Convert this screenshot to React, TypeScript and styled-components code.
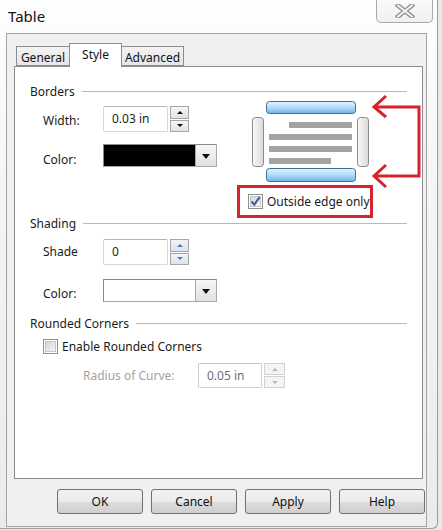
import React from "react";
import styled, { createGlobalStyle } from "styled-components";

const GlobalStyle = createGlobalStyle`
  html, body {
    margin: 0;
    padding: 0;
    background: #e9e9e9;
  }
  body {
    font-family: "Noto Sans", "Open Sans", sans-serif;
    font-size: 12px;
    color: #1a1a1a;
  }
`;

const Window = styled.div`
  width: 438px;
  height: 529px;
  display: flex;
  flex-direction: column;
  box-sizing: border-box;
  background: linear-gradient(180deg, #fefefe 0%, #f4f4f4 40%, #ebebeb 100%);
  border-right: 1px solid #9c9c9c;
  border-bottom: 1px solid #9c9c9c;
  border-bottom-right-radius: 6px;
`;

const TitleBar = styled.div`
  height: 33px;
  display: flex;
  align-items: flex-start;
  justify-content: space-between;
  flex-shrink: 0;
`;

const Title = styled.div`
  font-size: 15px;
  color: #111;
  padding: 6px 0 0 8px;
`;

const CloseButton = styled.div`
  width: 57px;
  height: 23px;
  margin-right: 4px;
  box-sizing: border-box;
  border: 1px solid #a9a9a9;
  border-top: none;
  border-radius: 0 0 5px 5px;
  background: linear-gradient(180deg, #fbfbfb, #f0f0f0);
  display: flex;
  align-items: center;
  justify-content: center;
`;

const Client = styled.div`
  flex: 1;
  margin: 0 10px 1px 6px;
  box-sizing: border-box;
  border: 1px solid #a3a3a3;
  background: #f0f0f0;
  padding: 9px 3px 0 7px;
  display: flex;
  flex-direction: column;
`;

const TabStrip = styled.div`
  display: flex;
  align-items: flex-end;
  height: 24px;
  padding-left: 3px;
  margin-bottom: -1px;
  position: relative;
  z-index: 1;
`;

const Tab = styled.div<{ $active?: boolean; $w: number }>`
  width: ${(p) => p.$w}px;
  box-sizing: border-box;
  height: ${(p) => (p.$active ? 24 : 20)}px;
  margin-bottom: ${(p) => (p.$active ? 0 : 1)}px;
  margin-left: -1px;
  border: 1px solid #898c95;
  border-bottom: ${(p) => (p.$active ? "none" : "1px solid #898c95")};
  background: ${(p) =>
    p.$active ? "#ffffff" : "linear-gradient(180deg, #f3f3f3, #e6e6e6)"};
  display: flex;
  justify-content: center;
  padding-top: 2px;
  font-size: 12px;
  color: #111;
`;

const Panel = styled.div`
  height: 413px;
  box-sizing: border-box;
  border: 1px solid #898c95;
  background: #ffffff;
  padding: 16px 15px 0 15px;
  display: flex;
  flex-direction: column;
`;

const SectionHeader = styled.div<{ $mt?: number }>`
  display: flex;
  align-items: center;
  gap: 7px;
  height: 16px;
  margin-top: ${(p) => p.$mt ?? 0}px;

  &::after {
    content: "";
    flex: 1;
    height: 1px;
    background: #b9b9b9;
  }
`;

const BordersBody = styled.div`
  display: flex;
  align-items: flex-start;
`;

const FieldColumn = styled.div`
  display: flex;
  flex-direction: column;
  padding: 7px 0 0 13px;
`;

const Row = styled.div<{ $mt?: number; $h: number; $indent?: number }>`
  display: flex;
  align-items: center;
  height: ${(p) => p.$h}px;
  margin-top: ${(p) => p.$mt ?? 0}px;
  padding-left: ${(p) => p.$indent ?? 13}px;
`;

const Label = styled.div<{ $w: number; $disabled?: boolean; $dy?: number }>`
  width: ${(p) => p.$w}px;
  flex-shrink: 0;
  color: ${(p) => (p.$disabled ? "#a3a3a3" : "#1a1a1a")};
  position: relative;
  top: ${(p) => p.$dy ?? 0}px;
`;

const TextBox = styled.div<{ $w: number; $disabled?: boolean }>`
  width: ${(p) => p.$w}px;
  height: 100%;
  box-sizing: border-box;
  border: 1px solid ${(p) => (p.$disabled ? "#cfcfcf" : "#d7d7d7")};
  border-top-color: ${(p) => (p.$disabled ? "#c4c4c4" : "#b5b5b5")};
  border-radius: 2px;
  background: #fff;
  padding: 3px 0 0 8px;
  color: ${(p) => (p.$disabled ? "#6f6f6f" : "#1a1a1a")};
`;

const Spinner = styled.div<{ $w: number }>`
  width: ${(p) => p.$w}px;
  height: 100%;
  margin-left: 2px;
  display: flex;
  flex-direction: column;
  gap: 1px;
`;

const SpinButton = styled.div<{ $tone: "black" | "blue" | "disabled"; $down?: boolean }>`
  flex: 1;
  box-sizing: border-box;
  border: 1px solid ${(p) => (p.$tone === "disabled" ? "#d2d2d2" : "#a6a6a6")};
  background: ${(p) =>
    p.$tone === "blue"
      ? "linear-gradient(180deg, #f1f3f8, #dde2ee)"
      : p.$tone === "disabled"
      ? "#f4f4f4"
      : "linear-gradient(180deg, #f6f6f6, #e2e2e2)"};
  display: flex;
  align-items: center;
  justify-content: center;

  &::before {
    content: "";
    width: 0;
    height: 0;
    border-left: 3.5px solid transparent;
    border-right: 3.5px solid transparent;
    ${(p) => (p.$down ? "border-top" : "border-bottom")}: 3px solid
      ${(p) =>
        p.$tone === "blue" ? "#5b74b4" : p.$tone === "disabled" ? "#b9b9b9" : "#111"};
  }
`;

const Combo = styled.div<{ $fill: string }>`
  width: 114px;
  height: 100%;
  box-sizing: border-box;
  border: 1px solid #a9a9a9;
  border-top-color: #8a8a8a;
  border-left-color: #8a8a8a;
  display: flex;
  background: ${(p) => p.$fill};
`;

const DropButton = styled.div`
  width: 21px;
  margin-left: auto;
  box-sizing: border-box;
  border-left: 1px solid #a9a9a9;
  background: linear-gradient(180deg, #f7f7f7, #e1e1e1);
  display: flex;
  align-items: center;
  justify-content: center;

  &::before {
    content: "";
    border-left: 4px solid transparent;
    border-right: 4px solid transparent;
    border-top: 5px solid #111;
    margin-top: 1px;
  }
`;

const PreviewColumn = styled.div`
  margin: -4px 0 -3px 20px;
  display: flex;
  flex-direction: column;
  flex-shrink: 0;
`;

const HighlightBox = styled.div`
  margin-top: 2px;
  width: 136px;
  height: 33px;
  box-sizing: border-box;
  border: 3px solid #d6232c;
  display: flex;
  align-items: center;
  padding-left: 8px;
  white-space: nowrap;
`;

const CheckRow = styled.label`
  display: flex;
  align-items: center;
  gap: 4px;
  white-space: nowrap;
`;

const CheckBox = styled.span`
  width: 15px;
  height: 15px;
  flex-shrink: 0;
  box-sizing: border-box;
  border: 1px solid #8e8f8f;
  background: #fff;
  display: flex;
  align-items: center;
  justify-content: center;
  position: relative;

  &::before {
    content: "";
    position: absolute;
    inset: 1px;
    background: linear-gradient(135deg, #d7d7d7, #f4f4f4);
    border: 1px solid #c6c6c6;
    box-sizing: border-box;
  }

  svg {
    position: relative;
  }
`;

const ButtonRow = styled.div`
  display: flex;
  justify-content: flex-end;
  gap: 8px;
  margin: 10px -2px 0 0;
`;

const DialogButton = styled.button`
  width: 86px;
  height: 25px;
  border: 1px solid #707070;
  border-radius: 3px;
  background: linear-gradient(180deg, #f2f2f2 0%, #ebebeb 50%, #dddddd 51%, #cfcfcf 100%);
  font-family: inherit;
  font-size: 12px;
  color: #111;
  padding: 0;
`;

const PreviewDrawing = () => (
  <svg width="187" height="88" viewBox="0 0 187 88" style={{ overflow: "visible" }}>
    <defs>
      <linearGradient id="blueBar" x1="0" y1="0" x2="0" y2="1">
        <stop offset="0" stopColor="#e4f3fd" />
        <stop offset="0.45" stopColor="#b7def8" />
        <stop offset="1" stopColor="#6fb4e6" />
      </linearGradient>
      <linearGradient id="grayBar" x1="0" y1="0" x2="1" y2="0">
        <stop offset="0" stopColor="#fafafa" />
        <stop offset="1" stopColor="#d9d9d9" />
      </linearGradient>
    </defs>
    <rect x="29.5" y="6.5" width="89" height="12" rx="3" fill="url(#blueBar)" stroke="#3f6f95" />
    <rect x="29.5" y="73.5" width="89" height="13" rx="3" fill="url(#blueBar)" stroke="#3f6f95" />
    <rect x="15.5" y="22.5" width="11" height="49" rx="3" fill="url(#grayBar)" stroke="#8a8a8a" />
    <rect x="120.5" y="22.5" width="11" height="49" rx="3" fill="url(#grayBar)" stroke="#8a8a8a" />
    <rect x="52" y="27" width="63" height="6" fill="#a3a3a3" />
    <rect x="32" y="39" width="83" height="6" fill="#a3a3a3" />
    <rect x="32" y="51" width="83" height="6" fill="#a3a3a3" />
    <rect x="32" y="63" width="62" height="6" fill="#a3a3a3" />
    <g fill="none" stroke="#d6232c" strokeWidth="3">
      <path d="M137 12 H182 V81 H137" />
      <path d="M149 1 L137 12 L149 22" />
      <path d="M149 70 L137 81 L149 92" />
    </g>
  </svg>
);

const CheckMark = () => (
  <svg width="11" height="11" viewBox="0 0 11 11">
    <path d="M1.5 5.5 L4.3 8.6 L9.6 1.2" fill="none" stroke="#3b5b9d" strokeWidth="2" />
  </svg>
);

const CloseGlyph = () => (
  <svg width="20" height="14" viewBox="0 0 20 14">
    <g fill="none" strokeLinecap="square">
      <path d="M3 1.5 L17 12.5 M17 1.5 L3 12.5" stroke="#8a8a8a" strokeWidth="4.5" />
      <path d="M3 1.5 L17 12.5 M17 1.5 L3 12.5" stroke="#f3f3f3" strokeWidth="2" />
    </g>
  </svg>
);

const App = () => {
  return (
    <>
      <GlobalStyle />
      <Window>
        <TitleBar>
          <Title>Table</Title>
          <CloseButton>
            <CloseGlyph />
          </CloseButton>
        </TitleBar>
        <Client>
          <TabStrip>
            <Tab $w={54}>General</Tab>
            <Tab $w={53} $active>
              Style
            </Tab>
            <Tab $w={63}>Advanced</Tab>
          </TabStrip>
          <Panel>
            {/* Borders */}
            <SectionHeader>Borders</SectionHeader>
            <BordersBody>
              <FieldColumn>
                <Row $h={26} $indent={0}>
                  <Label $w={60} $dy={1}>Width:</Label>
                  <TextBox $w={65}>0.03 in</TextBox>
                  <Spinner $w={19}>
                    <SpinButton $tone="black" />
                    <SpinButton $tone="black" $down />
                  </Spinner>
                </Row>
                <Row $h={23} $mt={12} $indent={0}>
                  <Label $w={60} $dy={4}>Color:</Label>
                  <Combo $fill="#000">
                    <DropButton />
                  </Combo>
                </Row>
              </FieldColumn>
              <PreviewColumn>
                <PreviewDrawing />
                <HighlightBox>
                  <CheckRow>
                    <CheckBox>
                      <CheckMark />
                    </CheckBox>
                    Outside edge only
                  </CheckRow>
                </HighlightBox>
              </PreviewColumn>
            </BordersBody>

            {/* Shading */}
            <SectionHeader>Shading</SectionHeader>
            <Row $h={26} $mt={8}>
              <Label $w={60} $dy={-1}>Shade</Label>
              <TextBox $w={65}>0</TextBox>
              <Spinner $w={19}>
                <SpinButton $tone="blue" />
                <SpinButton $tone="blue" $down />
              </Spinner>
            </Row>
            <Row $h={23} $mt={14}>
              <Label $w={60} $dy={3}>Color:</Label>
              <Combo $fill="#fff">
                <DropButton />
              </Combo>
            </Row>

            {/* Rounded Corners */}
            <SectionHeader $mt={13}>Rounded Corners</SectionHeader>
            <Row $h={15} $mt={8}>
              <CheckRow>
                <CheckBox />
                Enable Rounded Corners
              </CheckRow>
            </Row>
            <Row $h={25} $mt={9} $indent={53}>
              <Label $w={115} $disabled>
                Radius of Curve:
              </Label>
              <TextBox $w={64} $disabled>
                0.05 in
              </TextBox>
              <Spinner $w={21}>
                <SpinButton $tone="disabled" />
                <SpinButton $tone="disabled" $down />
              </Spinner>
            </Row>
          </Panel>
          <ButtonRow>
            <DialogButton>OK</DialogButton>
            <DialogButton>Cancel</DialogButton>
            <DialogButton>Apply</DialogButton>
            <DialogButton>Help</DialogButton>
          </ButtonRow>
        </Client>
      </Window>
    </>
  );
};

export default App;
